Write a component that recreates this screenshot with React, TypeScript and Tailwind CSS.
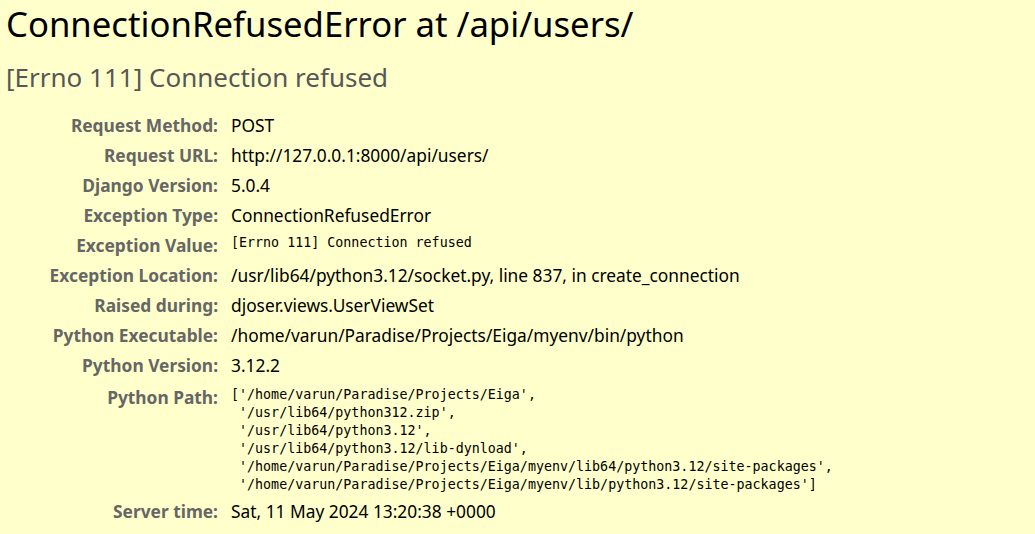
import React from "react";

const rows: { label: string; value: React.ReactNode; mono?: boolean; extra?: string }[] = [
  { label: "Request Method:", value: "POST" },
  { label: "Request URL:", value: "http://127.0.0.1:8000/api/users/" },
  { label: "Django Version:", value: "5.0.4" },
  { label: "Exception Type:", value: "ConnectionRefusedError" },
  { label: "Exception Value:", value: "[Errno 111] Connection refused", mono: true },
  { label: "Exception Location:", value: "/usr/lib64/python3.12/socket.py, line 837, in create_connection" },
  { label: "Raised during:", value: "djoser.views.UserViewSet" },
  { label: "Python Executable:", value: "/home/varun/Paradise/Projects/Eiga/myenv/bin/python" },
  { label: "Python Version:", value: "3.12.2" },
  {
    label: "Python Path:",
    mono: true,
    extra: "pt-[5px] pb-[2px]",
    value: `['/home/varun/Paradise/Projects/Eiga',
 '/usr/lib64/python312.zip',
 '/usr/lib64/python3.12',
 '/usr/lib64/python3.12/lib-dynload',
 '/home/varun/Paradise/Projects/Eiga/myenv/lib64/python3.12/site-packages',
 '/home/varun/Paradise/Projects/Eiga/myenv/lib/python3.12/site-packages']`,
  },
  { label: "Server time:", value: "Sat, 11 May 2024 13:20:38 +0000" },
];

export default function App() {
  return (
    <div className="min-h-[534px] w-full bg-[#ffffcc] px-[6px] pt-[2px] font-['Noto_Sans',sans-serif] text-black">
      <h1 className="text-[34.7px] leading-[44px] font-normal">ConnectionRefusedError at /api/users/</h1>
      <div className="mt-[14px] text-[26px] leading-[34px] text-[#575757]">[Errno 111] Connection refused</div>
      <div className="mt-[16px] grid grid-cols-[212px_1fr] gap-x-[13px] text-[17.33px] leading-[24px]">
        {rows.map((r) => (
          <React.Fragment key={r.label}>
            <div className={`${r.extra ?? "py-[3px]"} text-right font-bold text-[#666666]`}>{r.label}</div>
            <div className={r.extra ?? "py-[3px]"}>
              {r.mono ? (
                <pre className="pt-[1px] font-['DejaVu_Sans_Mono',monospace] text-[13.33px] leading-[18px] whitespace-pre">{r.value}</pre>
              ) : (
                r.value
              )}
            </div>
          </React.Fragment>
        ))}
      </div>
    </div>
  );
}
